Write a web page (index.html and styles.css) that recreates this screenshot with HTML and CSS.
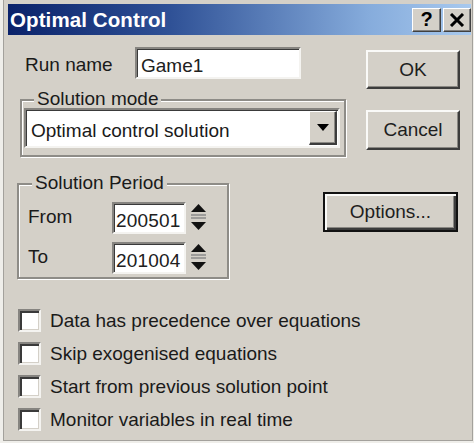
FILE: index.html
```html
<!DOCTYPE html>
<html lang="en">
<head>
<meta charset="utf-8">
<title>Optimal Control</title>
<link rel="stylesheet" href="styles.css">
</head>
<body>
<div class="window">
  <div class="titlebar">
    <span class="title">Optimal Control</span>
    <div class="caption-buttons">
      <span class="cap-btn help">?</span>
      <span class="cap-btn close">
        <svg width="16" height="14" viewBox="0 0 16 14"><path d="M2 1 L14 13 M14 1 L2 13" stroke="#000" stroke-width="3" fill="none"/></svg>
      </span>
    </div>
  </div>

  <div class="dialog">
    <div class="row row-name">
      <label class="lbl name-lbl">Run name</label>
      <div class="field name-field">Game1</div>
      <button class="btn ok">OK</button>
    </div>

    <div class="row row-mode">
      <div class="group mode-group">
        <span class="group-title">Solution mode</span>
        <div class="combo">
          <span class="combo-text">Optimal control solution</span>
          <span class="combo-btn">
            <svg width="12" height="7" viewBox="0 0 12 7"><path d="M0 0 H12 L6 7 Z" fill="#000"/></svg>
          </span>
        </div>
      </div>
      <button class="btn cancel">Cancel</button>
    </div>

    <div class="row row-period">
      <div class="group period-group">
        <span class="group-title">Solution Period</span>
        <div class="period-line">
          <span class="lbl period-lbl">From</span>
          <div class="field num">200501</div>
          <svg class="spin" width="17" height="28" viewBox="0 0 17 28">
            <path d="M8.5 0 L16 8 H1 Z" fill="#111"/>
            <path d="M1 11 H16 M1 14 H16" stroke="#8a8a8a" stroke-width="1.5"/>
            <path d="M1 18 H16 L8.5 26 Z" fill="#111"/>
          </svg>
        </div>
        <div class="period-line">
          <span class="lbl period-lbl">To</span>
          <div class="field num">201004</div>
          <svg class="spin" width="17" height="28" viewBox="0 0 17 28">
            <path d="M8.5 0 L16 8 H1 Z" fill="#111"/>
            <path d="M1 11 H16 M1 14 H16" stroke="#8a8a8a" stroke-width="1.5"/>
            <path d="M1 18 H16 L8.5 26 Z" fill="#111"/>
          </svg>
        </div>
      </div>
      <button class="btn options">Options...</button>
    </div>

    <div class="checks">
      <div class="check"><span class="box"></span><span class="check-text">Data has precedence over equations</span></div>
      <div class="check"><span class="box"></span><span class="check-text">Skip exogenised equations</span></div>
      <div class="check"><span class="box"></span><span class="check-text">Start from previous solution point</span></div>
      <div class="check"><span class="box"></span><span class="check-text">Monitor variables in real time</span></div>
    </div>
  </div>
</div>
</body>
</html>
```

FILE: styles.css
```css
* {
  box-sizing: border-box;
}

html, body {
  margin: 0;
  padding: 0;
}

body {
  width: 474px;
  height: 443px;
  background: #efeeea;
  font-family: "Liberation Sans", Arial, sans-serif;
  font-size: 19px;
  color: #1a1a1a;
  overflow: hidden;
}

/* window frame */
.window {
  margin-left: 3px;
  width: 470px;
  height: 441px;
  background: #d4d0c8;
  border-left: 1px solid #a3a19c;
  border-right: 1px solid #a3a19c;
  border-bottom: 1px solid #a3a19c;
  padding-top: 4px;
}

/* caption */
.titlebar {
  margin: 0 1px 0 4px;
  height: 31px;
  background: linear-gradient(to right, #0a226a 0%, #2f5196 35%, #86acdc 78%, #a8c9ee 100%);
  display: flex;
  align-items: center;
}

.title {
  padding-left: 2px;
  font-weight: bold;
  font-size: 20.5px;
  color: #fff;
  letter-spacing: 0.1px;
}

.caption-buttons {
  margin-left: auto;
  display: flex;
  gap: 2px;
}

.cap-btn {
  width: 29px;
  height: 24px;
  background: #d4d0c8;
  border-top: 1px solid #fff;
  border-left: 1px solid #fff;
  border-right: 1px solid #404040;
  border-bottom: 1px solid #404040;
  box-shadow: inset -1px -1px 0 #808080;
  display: flex;
  align-items: center;
  justify-content: center;
}

.help {
  font-weight: bold;
  font-size: 20px;
  color: #000;
}

.close {
  width: 28px;
}

/* dialog body */
.dialog {
  display: flex;
  flex-direction: column;
}

.row {
  display: flex;
  align-items: flex-start;
}

.lbl {
  height: 32px;
  padding-top: 5px;
  line-height: 26px;
}

.row-name {
  margin-top: 12px;
}

.name-lbl {
  margin-left: 21px;
  width: 110px;
}

.field {
  background: #fff;
  border-top: 2px solid #868480;
  border-left: 2px solid #868480;
  border-right: 2px solid #f4f3f0;
  border-bottom: 2px solid #f4f3f0;
  box-shadow: inset 1px 1px 0 #3a3a3a;
  height: 32px;
  padding-top: 6px;
  line-height: 22px;
  padding-left: 4px;
  color: #202020;
}

.name-field {
  width: 166px;
}

.btn {
  margin-left: auto;
  margin-right: 12px;
  width: 94px;
  height: 40px;
  padding: 0;
  background: #d4d0c8;
  font-family: inherit;
  font-size: 19px;
  color: #1e1e1e;
  border-top: 2px solid #fafaf8;
  border-left: 2px solid #fafaf8;
  border-right: 2px solid #3c3c3c;
  border-bottom: 2px solid #3c3c3c;
  box-shadow: inset -1px -1px 0 #8a8883;
}

.ok {
  margin-top: 3px;
  height: 39px;
}

/* etched group boxes */
.group {
  border: 2px solid #8e8c87;
  box-shadow: inset 1px 1px 0 #fff, 1px 1px 0 #fff;
}

.group-title {
  display: block;
  width: fit-content;
  background: #d4d0c8;
  padding: 0 3px;
  line-height: 22px;
  margin-top: -13px;
}

.row-mode {
  margin-top: 10px;
}

.mode-group {
  margin-left: 16px;
  width: 326px;
  padding: 0 4px 7px 2px;
}

.mode-group .group-title {
  margin-left: 10px;
}

.combo {
  margin-top: -2px;
  height: 40px;
  display: flex;
  align-items: center;
  background: #fff;
  border-top: 2px solid #868480;
  border-left: 2px solid #868480;
  border-right: 2px solid #f4f3f0;
  border-bottom: 2px solid #f4f3f0;
  box-shadow: inset 1px 1px 0 #3a3a3a;
  padding: 1px 1px 1px 5px;
}

.combo-text {
  flex: 1;
  padding-top: 6px;
}

.combo-btn {
  width: 28px;
  height: 34px;
  background: #d4d0c8;
  border-top: 1px solid #fff;
  border-left: 1px solid #fff;
  border-right: 2px solid #3c3c3c;
  border-bottom: 2px solid #3c3c3c;
  box-shadow: inset -1px -1px 0 #8a8883;
  display: flex;
  align-items: center;
  justify-content: center;
}

.cancel {
  margin-top: 11px;
}

.row-period {
  margin-top: 26px;
}

.period-group {
  margin-left: 13px;
  width: 212px;
  padding: 0 4px 3px 9px;
}

.period-group .group-title {
  margin-left: 4px;
}

.period-line {
  display: flex;
  align-items: center;
  height: 32px;
  margin-top: 8px;
}

.period-lbl {
  width: 84px;
  padding-top: 2px;
}

.num {
  width: 74px;
  padding-left: 2px;
  letter-spacing: 0.2px;
}

.spin {
  margin-left: 4px;
}

.options {
  margin-top: 9px;
  margin-right: 14px;
  width: 135px;
  height: 40px;
  border: 2px solid #111;
  box-shadow: inset 2px 2px 0 #fafaf8, inset -2px -2px 0 #3c3c3c, inset -3px -3px 0 #8a8883;
}

/* check boxes */
.checks {
  margin-top: 25px;
  display: flex;
  flex-direction: column;
}

.check {
  display: flex;
  align-items: center;
  height: 33px;
}

.box {
  margin-left: 14px;
  width: 23px;
  height: 23px;
  background: #fff;
  border-top: 2px solid #868480;
  border-left: 2px solid #868480;
  border-right: 2px solid #f4f3f0;
  border-bottom: 2px solid #f4f3f0;
  box-shadow: inset 2px 2px 0 #3a3a3a, inset -1px -1px 0 #d4d0c8;
}

.check-text {
  margin-left: 9px;
}
```
